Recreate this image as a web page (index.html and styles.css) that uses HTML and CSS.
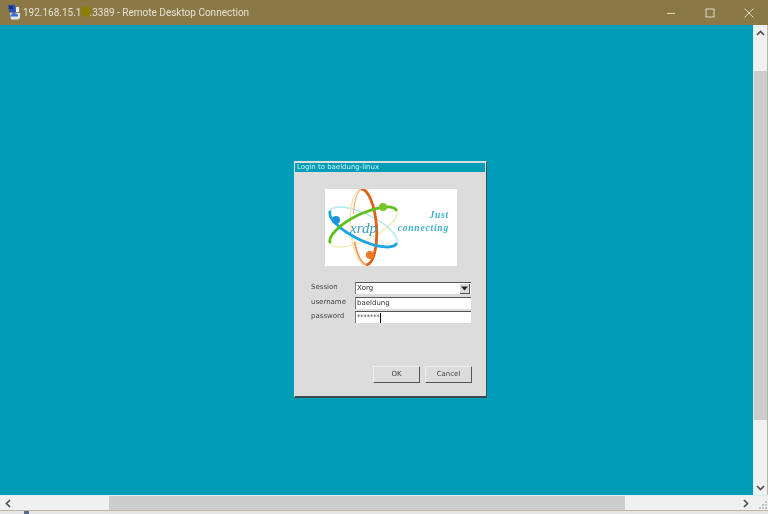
FILE: index.html
```html
<!DOCTYPE html>
<html lang="en">
<head>
<meta charset="utf-8">
<title>Remote Desktop Connection</title>
<link rel="stylesheet" href="styles.css">
</head>
<body>
<div class="window">
  <header class="titlebar">
    <svg class="app-icon" width="16" height="16" viewBox="0 0 16 16">
      <path d="M4 9h10v5l-2 1.500H5z" fill="#dfe3ea"/>
      <path d="M2 1h7l1 7H3z" fill="#2a4fb8"/>
      <path d="M3 2h4v3H3z" fill="#1b2f86"/>
      <path d="M7 8l5 2.500v2H4z" fill="#3a6fd8"/>
      <path d="M10 3h3v5h-3z" fill="#e9edf2"/>
    </svg>
    <span class="title-text">192.168.15.1<span class="blob"></span>.3389 - Remote Desktop Connection</span>
    <div class="controls">
      <span class="ctl"><svg width="10" height="10" viewBox="0 0 10 10"><path d="M1 5.500h8" stroke="#dcd8c8" fill="none"/></svg></span>
      <span class="ctl"><svg width="10" height="10" viewBox="0 0 10 10"><rect x="1" y="1" width="8" height="8" stroke="#dcd8c8" fill="none"/></svg></span>
      <span class="ctl"><svg width="10" height="10" viewBox="0 0 10 10"><path d="M.5.5l9 9M9.500.5l-9 9" stroke="#dcd8c8" fill="none"/></svg></span>
    </div>
  </header>
  <div class="middle">
    <main class="desktop">
      <section class="dialog">
        <div class="dialog-title">Login to baeldung-linux</div>
        <div class="dialog-body">
          <svg class="logo" width="132" height="77" viewBox="0 0 132 77">
            <rect width="132" height="77" fill="#fff"/>
            <g fill="none" transform="translate(38.500 38)">
              <ellipse rx="37" ry="13" transform="rotate(-26)" stroke="#eef0b8" stroke-width="1.500"/>
              <ellipse rx="37" ry="13" transform="rotate(26)" stroke="#b4e6f4" stroke-width="1.500"/>
              <g transform="rotate(-4)">
                <ellipse rx="13" ry="38" stroke="#f6e6c0" stroke-width="1.500"/>
                <path d="M0-38A13 38 0 0 1 0 38" stroke="#e0601a" stroke-width="2.800"/>
                <path d="M0 38A13 38 0 0 1-10 14" stroke="#f09a50" stroke-width="1.800"/>
                <path d="M0-38A13 38 0 0 0-9-14" stroke="#f2b070" stroke-width="1.200"/>
              </g>
              <path transform="rotate(26)" d="M-37 0A37 13 0 0 0 37 0" stroke="#1aa4e6" stroke-width="2.800"/>
              <path transform="rotate(-26)" d="M-37 0A37 13 0 0 1 37 0" stroke="#5ec01e" stroke-width="2.800"/>
            </g>
            <circle cx="58" cy="18" r="4" fill="#7cc22c"/>
            <circle cx="11" cy="31" r="4" fill="#1c94dc"/>
            <circle cx="45" cy="66" r="4" fill="#ea7a24"/>
            <text class="logo-xrdp" x="25" y="44">xrdp</text>
            <text class="logo-tag" x="124" y="29" text-anchor="end">Just</text>
            <text class="logo-tag" x="124" y="42" text-anchor="end">connecting</text>
          </svg>
          <div class="form">
            <label class="label">Session</label>
            <div class="field combo"><span>Xorg</span><span class="combo-btn"><svg width="7" height="5" viewBox="0 0 7 5"><path d="M0 .5h7L3.500 4.500z" fill="#222"/></svg></span></div>
            <label class="label">username</label>
            <div class="field"><span>baeldung</span></div>
            <label class="label">password</label>
            <div class="field"><span class="secret">*******</span><span class="caret"></span></div>
          </div>
          <div class="buttons">
            <span class="btn">OK</span>
            <span class="btn">Cancel</span>
          </div>
        </div>
      </section>
    </main>
    <aside class="vscroll">
      <span class="sb-end"><svg width="9" height="6" viewBox="0 0 9 6"><path d="M1 5l3.500-3.500L8 5" stroke="#505050" stroke-width="1.700" fill="none"/></svg></span>
      <span class="sb-gap top"></span>
      <span class="sb-thumb"></span>
      <span class="sb-gap"></span>
      <span class="sb-end"><svg width="9" height="6" viewBox="0 0 9 6"><path d="M1 1l3.500 3.500L8 1" stroke="#505050" stroke-width="1.700" fill="none"/></svg></span>
    </aside>
  </div>
  <div class="hscroll">
    <span class="h-end"><svg width="6" height="9" viewBox="0 0 6 9"><path d="M5 1L1.500 4.500 5 8" stroke="#505050" stroke-width="1.700" fill="none"/></svg></span>
    <span class="h-gap left"></span>
    <span class="h-thumb"></span>
    <span class="h-gap"></span>
    <span class="h-end"><svg width="6" height="9" viewBox="0 0 6 9"><path d="M1 1l3.500 3.500L1 8" stroke="#505050" stroke-width="1.700" fill="none"/></svg></span>
    <span class="corner"><svg width="11" height="11" viewBox="0 0 11 11"><path d="M8 2h2v2H8zM8 5h2v2H8zM5 5h2v2H5zM8 8h2v2H8zM5 8h2v2H5zM2 8h2v2H2z" fill="#c4c4c4"/></svg></span>
  </div>
  <footer class="strip"><span class="strip-mark"></span></footer>
</div>
</body>
</html>
```
FILE: styles.css
```css
html, body {
  margin: 0;
  padding: 0;
  height: 100%;
  overflow: hidden;
}
.window {
  width: 768px;
  height: 514px;
  display: flex;
  flex-direction: column;
  background: #e6e6e6;
}
.titlebar {
  height: 25px;
  flex: none;
  background: #8a7847;
  display: flex;
  align-items: center;
  padding-left: 6px;
  color: #e6e2d2;
  font: 10px/25px Roboto, sans-serif;
}
.app-icon {
  margin-right: 1px;
  margin-top: -1px;
  filter: blur(0.3px);
}
.title-text {
  flex: 1;
  white-space: nowrap;
  filter: blur(0.3px);
}
.blob {
  display: inline-block;
  width: 10px;
  height: 11px;
  margin: 0 -1px 0 -1px;
  border-radius: 50%;
  background: #8b8000;
  vertical-align: -1px;
}
.controls {
  display: flex;
}
.ctl {
  width: 39px;
  height: 25px;
  display: flex;
  align-items: center;
  justify-content: center;
}
.middle {
  height: 471px;
  flex: none;
  display: flex;
}
.desktop {
  width: 753px;
  flex: none;
  background: #009db8;
  padding: 136px 0 0 294px;
  box-sizing: border-box;
}
.dialog {
  width: 193px;
  height: 237px;
  box-sizing: border-box;
  background: #dcdcdc;
  border: 1px solid #d8e0e2;
  border-right: 1px solid #3c4a50;
  border-bottom: 2px solid #3c4a50;
  padding-top: 1px;
  display: flex;
  flex-direction: column;
  font-family: "DejaVu Sans", sans-serif;
  filter: blur(0.35px);
}
.dialog-title {
  margin: 0 1px 0 0;
  height: 9px;
  background: #009db8;
  color: #d8f0f4;
  font-size: 7px;
  line-height: 9px;
  padding-left: 2px;
  white-space: nowrap;
  letter-spacing: -0.02px;
}
.dialog-body {
  flex: 1;
  display: flex;
  flex-direction: column;
}
.logo {
  display: block;
  margin: 17px 0 0 30px;
}
.form {
  display: grid;
  grid-template-columns: 44px 116px;
  grid-auto-rows: 12px;
  row-gap: 2.500px;
  margin: 16px 0 0 16px;
  font-size: 7px;
  color: #444;
}
.label {
  line-height: 10px;
  white-space: nowrap;
}
.field {
  box-sizing: border-box;
  background: #fff;
  border-top: 1px solid #555;
  border-left: 1px solid #777;
  padding-left: 1px;
  line-height: 11px;
  display: flex;
  align-items: center;
  color: #333;
}
.combo {
  justify-content: space-between;
}
.combo-btn {
  width: 9px;
  height: 9px;
  margin-right: 1px;
  background: #dcdcdc;
  border-right: 1px solid #555;
  border-bottom: 1px solid #555;
  display: flex;
  align-items: center;
  justify-content: center;
}
.secret {
  font-size: 6.500px;
}
.caret {
  width: 1px;
  height: 10px;
  background: #111;
}
.buttons {
  display: flex;
  gap: 5px;
  margin: 43px 0 0 78px;
}
.btn {
  width: 47px;
  height: 17px;
  box-sizing: border-box;
  border: 1px solid #eee;
  border-right: 1px solid #555;
  border-bottom: 1px solid #555;
  font-size: 7px;
  line-height: 15px;
  text-align: center;
  color: #444;
}
.vscroll {
  width: 15px;
  flex: none;
  box-sizing: border-box;
  border-left: 1px solid #d8eef2;
  border-right: 1px solid #b9b4a6;
  background: #f0f0f0;
  display: flex;
  flex-direction: column;
}
.sb-end {
  height: 16px;
  flex: none;
  display: flex;
  align-items: center;
  justify-content: center;
}
.sb-gap {
  flex: 1;
}
.sb-gap.top {
  flex: none;
  height: 30px;
}
.sb-thumb {
  height: 349px;
  flex: none;
  background: #cdcdcd;
}
.hscroll {
  height: 14px;
  flex: none;
  background: #f0f0f0;
  display: flex;
  align-items: center;
  border-top: 1px solid #d8eef2;
  margin-top: -1px;
}
.h-end {
  width: 15px;
  height: 14px;
  flex: none;
  display: flex;
  align-items: center;
  justify-content: center;
}
.h-gap {
  flex: 1;
}
.h-gap.left {
  flex: none;
  width: 94px;
}
.h-thumb {
  width: 516px;
  height: 14px;
  flex: none;
  background: #cdcdcd;
}
.corner {
  width: 15px;
  height: 14px;
  flex: none;
  display: flex;
  align-items: flex-end;
  justify-content: flex-end;
}
.strip {
  flex: 1;
  border-top: 1px solid #bdb9a4;
  background: #e6e6e6;
  padding-left: 24px;
}
.strip-mark {
  display: block;
  width: 5px;
  height: 3px;
  background: #5a6a8a;
}
.logo-xrdp {
  font: italic 15px "Liberation Serif", serif;
  fill: #3a9cc0;
}
.logo-tag {
  font: italic bold 9.500px "Liberation Serif", serif;
  fill: #3cb0c8;
  letter-spacing: 0.800px;
}
```
